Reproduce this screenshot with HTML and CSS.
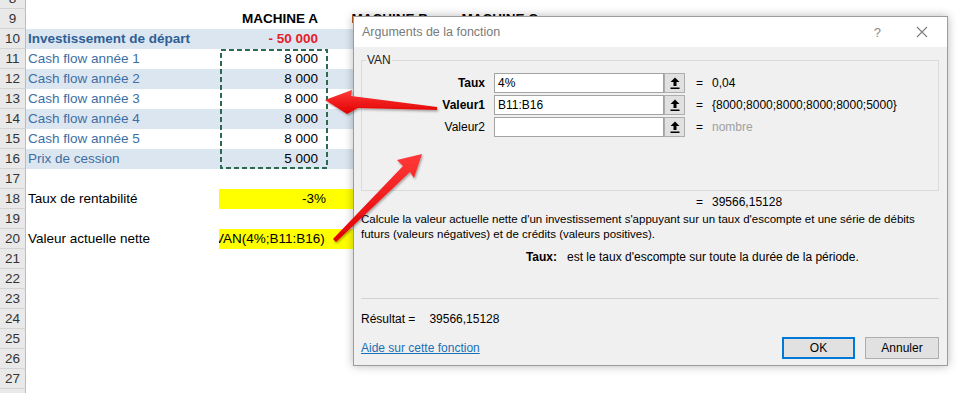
FILE: index.html
```html
<!DOCTYPE HTML>
<html>
	<head>
		<meta charset="utf-8">
		<link rel="stylesheet" href="styles.css">
	</head>
	<body>
		<div class="sheet">
			<div class="row"><div class="hd">8</div></div>
			<div class="row"><div class="hd">9</div><div class="cell a"></div><div class="cell b head">MACHINE A</div><div class="cell c head">MACHINE B</div><div class="cell d head">MACHINE C</div></div>
			<div class="row band"><div class="hd">10</div><div class="cell a strong">Investissement de départ</div><div class="cell b num neg">- 50 000</div><div class="cell c"></div><div class="cell d"></div></div>
			<div class="row"><div class="hd">11</div><div class="cell a">Cash flow année 1</div><div class="cell b num">8 000</div></div>
			<div class="row band"><div class="hd">12</div><div class="cell a">Cash flow année 2</div><div class="cell b num">8 000</div><div class="cell c"></div><div class="cell d"></div></div>
			<div class="row"><div class="hd">13</div><div class="cell a">Cash flow année 3</div><div class="cell b num">8 000</div></div>
			<div class="row band"><div class="hd">14</div><div class="cell a">Cash flow année 4</div><div class="cell b num">8 000</div><div class="cell c"></div><div class="cell d"></div></div>
			<div class="row"><div class="hd">15</div><div class="cell a">Cash flow année 5</div><div class="cell b num">8 000</div></div>
			<div class="row band"><div class="hd">16</div><div class="cell a">Prix de cession</div><div class="cell b num">5 000</div><div class="cell c"></div><div class="cell d"></div></div>
			<div class="row"><div class="hd">17</div></div>
			<div class="row"><div class="hd">18</div><div class="cell a plain">Taux de rentabilité</div><div class="cell b hl pct">-3%</div><div class="cell c hl"></div></div>
			<div class="row"><div class="hd">19</div></div>
			<div class="row"><div class="hd">20</div><div class="cell a plain">Valeur actuelle nette</div><div class="cell b hl edit"><span>=VAN(4%;B11:B16)</span></div><div class="cell c hl"></div></div>
			<div class="row"><div class="hd">21</div></div>
			<div class="row"><div class="hd">22</div></div>
			<div class="row"><div class="hd">23</div></div>
			<div class="row"><div class="hd">24</div></div>
			<div class="row"><div class="hd">25</div></div>
			<div class="row"><div class="hd">26</div></div>
			<div class="row"><div class="hd">27</div></div>
			<div class="row"><div class="hd">28</div></div>
		</div>

		<div class="dialog">
			<div class="titlebar">
				<span class="title">Arguments de la fonction</span>
				<span class="help">?</span>
				<svg class="close" width="12" height="12" viewBox="0 0 12 12"><path d="M1 1L11 11M11 1L1 11" stroke="#7c7c7c" stroke-width="1.1" fill="none"/></svg>
			</div>
			<div class="body">
				<fieldset class="group">
					<legend>VAN</legend>
					<div class="arg">
						<label class="bold">Taux</label>
						<div class="field">4%</div>
						<div class="ref"><svg width="10" height="12" viewBox="0 0 10 12"><path d="M5 0.5L9.5 5H6.5V9H3.5V5H0.5Z" fill="#000"/><rect x="0.5" y="10.5" width="9" height="1.5" fill="#000"/></svg></div>
						<span class="eq">=</span>
						<span class="val">0,04</span>
					</div>
					<div class="arg">
						<label class="bold">Valeur1</label>
						<div class="field">B11:B16</div>
						<div class="ref"><svg width="10" height="12" viewBox="0 0 10 12"><path d="M5 0.5L9.5 5H6.5V9H3.5V5H0.5Z" fill="#000"/><rect x="0.5" y="10.5" width="9" height="1.5" fill="#000"/></svg></div>
						<span class="eq">=</span>
						<span class="val">{8000;8000;8000;8000;8000;5000}</span>
					</div>
					<div class="arg">
						<label>Valeur2</label>
						<div class="field"></div>
						<div class="ref"><svg width="10" height="12" viewBox="0 0 10 12"><path d="M5 0.5L9.5 5H6.5V9H3.5V5H0.5Z" fill="#000"/><rect x="0.5" y="10.5" width="9" height="1.5" fill="#000"/></svg></div>
						<span class="eq">=</span>
						<span class="val dim">nombre</span>
					</div>
				</fieldset>
				<div class="total"><span class="eq">=</span><span class="val">39566,15128</span></div>
				<p class="desc">Calcule la valeur actuelle nette d'un investissement s'appuyant sur un taux d'escompte et une série de débits futurs (valeurs négatives) et de crédits (valeurs positives).</p>
				<div class="hint"><b>Taux:</b><span>est le taux d'escompte sur toute la durée de la période.</span></div>
				<hr/>
				<p class="result">Résultat =<span>39566,15128</span></p>
				<div class="footer">
					<a href="#">Aide sur cette fonction</a>
					<button class="ok">OK</button>
					<button>Annuler</button>
				</div>
			</div>
		</div>

		<svg class="marks" width="971" height="393" viewBox="0 0 971 393">
			<defs>
				<linearGradient id="red" x1="0" y1="0" x2="0" y2="1">
					<stop offset="0" stop-color="#ff3a3a"/>
					<stop offset="1" stop-color="#e00000"/>
				</linearGradient>
				<filter id="drop" x="-20%" y="-20%" width="140%" height="140%">
					<feDropShadow dx="1" dy="1.5" stdDeviation="1.2" flood-color="#000" flood-opacity="0.35"/>
				</filter>
			</defs>
			<rect x="221" y="50" width="106" height="118" fill="none" stroke="#2b6a4f" stroke-width="2" stroke-dasharray="5 3"/>
			<polygon filter="url(#drop)" fill="url(#red)" points="325,100 352,90 351,96 437,107 437,110 358,108 347,114"/>
			<polygon filter="url(#drop)" fill="url(#red)" points="422,154 397,160 403,166 333,239 336,242 410,172 414,178"/>
		</svg>
	</body>
</html>
```

FILE: styles.css
```css
* { margin: 0; padding: 0; box-sizing: border-box; }
body {
	background: #fff;
	font-family: "Liberation Sans", Arial, sans-serif;
	height: 393px;
	overflow: hidden;
	position: relative;
	width: 971px;
}

/* sheet */
.sheet {
	font-size: 13.5px;
	margin-top: -11px;
}
.row {
	display: flex;
	height: 20px;
}
.hd {
	background: #e9e9e9;
	border-bottom: 1px solid #d4d4d4;
	border-right: 1px solid #bcbcbc;
	color: #333;
	flex: none;
	line-height: 19px;
	text-align: center;
	width: 26px;
}
.cell {
	color: #3d6fa3;
	flex: none;
	line-height: 20px;
	overflow: hidden;
	white-space: nowrap;
}
.a { padding-left: 2px; width: 193px; }
.b, .c, .d { width: 110px; }
.band .cell { background: #dce6f1; }
.strong { color: #2e5f96; font-weight: bold; }
.plain { color: #000; }
.head {
	color: #000;
	font-weight: bold;
	padding-right: 11px;
	text-align: right;
}
.num {
	color: #000;
	padding-right: 11px;
	text-align: right;
}
.neg { color: #e3202a; font-weight: bold; }
.hl { background: #ffff00; color: #000; }
.pct { padding-right: 3px; text-align: right; }
.edit span {
	display: inline-block;
	margin-left: -12px;
}

/* dialog */
.dialog {
	background: #f0f0f0;
	border: 1px solid #9c9c9c;
	box-shadow: 0 0 9px rgba(0, 0, 0, 0.28);
	font-size: 12px;
	height: 350px;
	left: 353px;
	position: absolute;
	top: 16px;
	width: 595px;
}
.titlebar {
	align-items: center;
	background: #fff;
	display: flex;
	height: 30px;
	padding-left: 8px;
}
.title {
	color: #7a7a7a;
	flex: 1;
	font-size: 12.5px;
}
.help {
	color: #8a8a8a;
	font-size: 13px;
	margin-right: 35px;
}
.close {
	margin-right: 19px;
}
.body {
	padding: 0 8px 0 7px;
}
.group {
	border: 1px solid #dadada;
	margin-top: 6px;
	padding: 6px 0 51px;
}
.group legend {
	color: #222;
	line-height: 14px;
	margin-left: 4px;
	padding: 0 1px;
}
.arg {
	align-items: center;
	display: flex;
	height: 20px;
	margin-bottom: 2px;
}
.arg label {
	text-align: right;
	width: 123px;
}
.bold { font-weight: bold; }
.field {
	background: #fff;
	border: 1px solid #a3a3a3;
	height: 20px;
	line-height: 18px;
	margin-left: 9px;
	padding-left: 3px;
	width: 170px;
}
.ref {
	align-items: center;
	background: #e1e1e1;
	border: 1px solid #adadad;
	display: flex;
	height: 20px;
	justify-content: center;
	width: 21px;
}
.eq {
	margin-left: 11px;
	width: 16px;
}
.dim { color: #a0a0a0; }
.total {
	display: flex;
	margin: 4px 0 0 324px;
	line-height: 15px;
}
.desc {
	font-size: 11.5px;
	line-height: 15px;
	margin-top: 2px;
	width: 578px;
}
.hint {
	display: flex;
	line-height: 15px;
	margin-top: 8px;
}
.hint b {
	text-align: right;
	width: 196px;
}
.hint span {
	margin-left: 10px;
}
hr {
	border: none;
	border-top: 1px solid #d3d3d3;
	margin-top: 33px;
}
.result {
	line-height: 15px;
	margin-top: 13px;
}
.result span {
	margin-left: 14px;
}
.footer {
	align-items: center;
	display: flex;
	margin-top: 10px;
}
.footer a {
	color: #1a6fb7;
	flex: 1;
}
.footer button {
	background: #e1e1e1;
	border: 1px solid #adadad;
	font-family: "Liberation Sans", Arial, sans-serif;
	font-size: 12px;
	height: 22px;
	margin-left: 10px;
	width: 74px;
}
.footer button.ok {
	border: 2px solid #0078d7;
	width: 73px;
}

.marks {
	left: 0;
	pointer-events: none;
	position: absolute;
	top: 0;
}
```
